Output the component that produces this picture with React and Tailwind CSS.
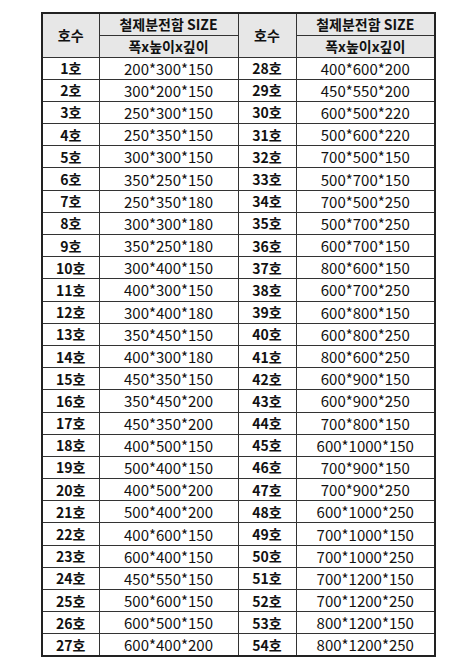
const left = [
  "200*300*150", "300*200*150", "250*300*150", "250*350*150", "300*300*150",
  "350*250*150", "250*350*180", "300*300*180", "350*250*180", "300*400*150",
  "400*300*150", "300*400*180", "350*450*150", "400*300*180", "450*350*150",
  "350*450*200", "450*350*200", "400*500*150", "500*400*150", "400*500*200",
  "500*400*200", "400*600*150", "600*400*150", "450*550*150", "500*600*150",
  "600*500*150", "600*400*200",
];

const right = [
  "400*600*200", "450*550*200", "600*500*220", "500*600*220", "700*500*150",
  "500*700*150", "700*500*250", "500*700*250", "600*700*150", "800*600*150",
  "600*700*250", "600*800*150", "600*800*250", "800*600*250", "600*900*150",
  "600*900*250", "700*800*150", "600*1000*150", "700*900*150", "700*900*250",
  "600*1000*250", "700*1000*150", "700*1000*250", "700*1200*150", "700*1200*250",
  "800*1200*150", "800*1200*250",
];

const cell = "border border-[#333] p-0 text-center align-middle leading-none";
const head = `${cell} bg-[#e7e7e7] text-[14px] font-bold`;

export default function App() {
  return (
    <div
      className="min-h-[665px] w-[474px] bg-white pl-[41px] pt-[12px] text-[#111]"
      style={{ fontFamily: '"Noto Sans CJK KR", "Noto Sans", sans-serif' }}
    >
      <table className="h-[643px] w-[393px] table-fixed border-collapse border-2 border-[#222]">
        <colgroup>
          <col className="w-[57px]" />
          <col className="w-[139px]" />
          <col className="w-[58px]" />
          <col className="w-[139px]" />
        </colgroup>
        <thead>
          <tr className="h-[22px]">
            <th rowSpan={2} className={head}>호수</th>
            <th className={head}>철제분전함 SIZE</th>
            <th rowSpan={2} className={head}>호수</th>
            <th className={head}>철제분전함 SIZE</th>
          </tr>
          <tr className="h-[22px]">
            <th className={head}>폭x높이x깊이</th>
            <th className={head}>폭x높이x깊이</th>
          </tr>
        </thead>
        <tbody>
          {left.map((size, i) => (
            <tr key={i} className="h-[22.2px]">
              <td className={`${cell} text-[14px] font-bold`}>{i + 1}호</td>
              <td className={`${cell} text-[15px]`}>{size}</td>
              <td className={`${cell} text-[14px] font-bold`}>{i + 28}호</td>
              <td className={`${cell} text-[15px]`}>{right[i]}</td>
            </tr>
          ))}
        </tbody>
      </table>
    </div>
  );
}
